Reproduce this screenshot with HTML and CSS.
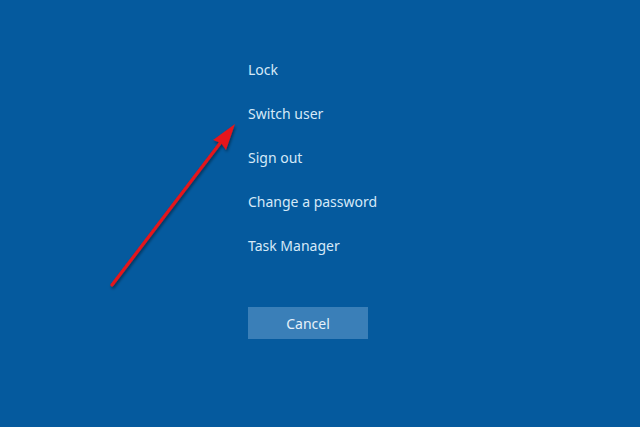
FILE: index.html
```html
<!DOCTYPE html>
<html lang="en">

<head>
  <meta charset="UTF-8" />
  <meta name="viewport" content="width=device-width, initial-scale=1.0" />
  <title>Security options</title>
  <link rel="stylesheet" href="styles.css">
</head>

<body>
  <div class="screen">
    <ul class="options">
      <li>Lock</li>
      <li>Switch user</li>
      <li>Sign out</li>
      <li>Change a password</li>
      <li>Task Manager</li>
    </ul>
    <button type="button" class="cancel">Cancel</button>
    <svg class="arrow" width="640" height="427" viewBox="0 0 640 427">
      <defs>
        <filter id="shadow" x="-20%" y="-20%" width="140%" height="140%">
          <feDropShadow dx="1" dy="2" stdDeviation="1.5" flood-color="#000" flood-opacity="0.45" />
        </filter>
      </defs>
      <g filter="url(#shadow)">
        <line x1="112" y1="285" x2="221" y2="142" stroke="#e5141a" stroke-width="3.2" stroke-linecap="round" />
        <polygon points="235,124 226,150 221,143 213,140" fill="#e5141a" />
      </g>
    </svg>
  </div>
</body>

</html>
```

FILE: styles.css
```css
body {
  margin: 0;
  font-family: "Noto Sans", sans-serif;
  background: #055a9e;
}

.screen {
  display: flex;
  flex-direction: column;
  align-items: flex-start;
  height: 427px;
  padding: 48px 0 0 248px;
  box-sizing: border-box;
}

.options {
  list-style: none;
  margin: 0;
  padding: 0;
}

.options li {
  font-size: 14px;
  line-height: 44px;
  color: #d5e9f8;
}

.cancel {
  margin-top: 39px;
  width: 120px;
  height: 32px;
  border: none;
  background: #3a7fb8;
  color: #e6f1fa;
  font-family: "Noto Sans", sans-serif;
  font-size: 14px;
}

.arrow {
  position: absolute;
  left: 0;
  top: 0;
  pointer-events: none;
}
```
